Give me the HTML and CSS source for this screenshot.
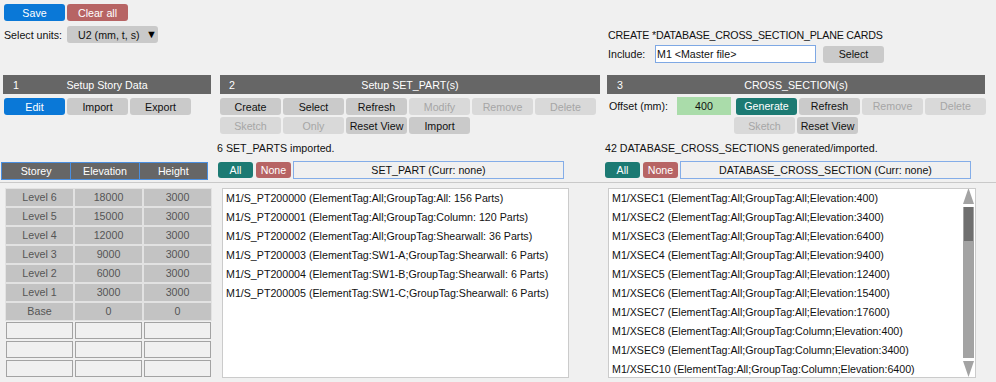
FILE: index.html
```html
<!DOCTYPE html>
<html lang="en">
<head>
    <meta charset="UTF-8">
    <meta name="viewport" content="width=device-width, initial-scale=1.0">
    <title>Story Cross Sections</title>
    <link rel="stylesheet" href="styles.css">
</head>
<body>
    <!-- Upper part: global actions, section headers, toolbars and filters -->
    <div class="upper">
        <!-- Top row -->
        <div class="top-left">
            <div class="btn-row">
                <button class="btn blue">Save</button>
                <button class="btn red">Clear all</button>
            </div>
            <div class="units-row">
                <span class="units-label">Select units:</span>
                <div class="dropdown"><span>U2 (mm, t, s)</span><span class="caret">&#9660;</span></div>
            </div>
        </div>
        <div class="top-mid"></div>
        <div class="top-right">
            <div class="create-title">CREATE *DATABASE_CROSS_SECTION_PLANE CARDS</div>
            <div class="include-row">
                <span class="include-label">Include:</span>
                <div class="text-box">M1 &lt;Master file&gt;</div>
                <button class="btn gray">Select</button>
            </div>
        </div>

        <!-- Section headers -->
        <div class="section-head head-1"><span class="num">1</span><span class="title">Setup Story Data</span></div>
        <div class="section-head head-2"><span class="num">2</span><span class="title">Setup SET_PART(s)</span></div>
        <div class="section-head head-3"><span class="num">3</span><span class="title">CROSS_SECTION(s)</span></div>

        <!-- Toolbars -->
        <div class="ctrl-1">
            <div class="btn-row">
                <button class="btn blue">Edit</button>
                <button class="btn gray">Import</button>
                <button class="btn gray">Export</button>
            </div>
        </div>
        <div class="ctrl-2">
            <div class="btn-row">
                <button class="btn gray">Create</button>
                <button class="btn gray">Select</button>
                <button class="btn gray">Refresh</button>
                <button class="btn off">Modify</button>
                <button class="btn off">Remove</button>
                <button class="btn off">Delete</button>
            </div>
            <div class="btn-row">
                <button class="btn off">Sketch</button>
                <button class="btn off">Only</button>
                <button class="btn gray">Reset View</button>
                <button class="btn gray">Import</button>
            </div>
            <div class="status">6 SET_PARTS imported.</div>
        </div>
        <div class="ctrl-3">
            <div class="btn-row offset-row">
                <span class="offset-label">Offset (mm):</span>
                <div class="offset-input">400</div>
                <button class="btn teal">Generate</button>
                <button class="btn gray">Refresh</button>
                <button class="btn off">Remove</button>
                <button class="btn off">Delete</button>
            </div>
            <div class="btn-row indent-row">
                <button class="btn off">Sketch</button>
                <button class="btn gray">Reset View</button>
            </div>
            <div class="status">42 DATABASE_CROSS_SECTIONS generated/imported.</div>
        </div>

        <!-- Filters / table header -->
        <div class="filt-1">
            <div class="story-head">
                <div>Storey</div>
                <div>Elevation</div>
                <div>Height</div>
            </div>
        </div>
        <div class="filter-row filt-2">
            <button class="btn small teal">All</button>
            <button class="btn small red">None</button>
            <div class="filter-box set-box">SET_PART (Curr: none)</div>
        </div>
        <div class="filter-row filt-3">
            <button class="btn small teal">All</button>
            <button class="btn small red">None</button>
            <div class="filter-box xsec-box">DATABASE_CROSS_SECTION (Curr: none)</div>
        </div>
    </div>

    <div class="divider"></div>

    <!-- Lower part: story table and the two lists -->
    <div class="lower">
        <div class="story-table" id="story-table"></div>

        <div class="list set-list">
            <div class="list-items" id="set-list"></div>
        </div>

        <div class="list xsec-list">
            <div class="list-items" id="xsec-list"></div>
            <div class="scrollbar">
                <svg class="arrow" width="11" height="16" viewBox="0 0 11 16"><polygon points="5.5,0 11,16 0,16" fill="#a3a3a3"/></svg>
                <div class="track"><div class="thumb"></div></div>
                <svg class="arrow" width="11" height="16" viewBox="0 0 11 16"><polygon points="0,0 11,0 5.5,16" fill="#a3a3a3"/></svg>
            </div>
        </div>
    </div>

    <script>
        const stories = [
            ['Level 6', '18000', '3000'],
            ['Level 5', '15000', '3000'],
            ['Level 4', '12000', '3000'],
            ['Level 3', '9000', '3000'],
            ['Level 2', '6000', '3000'],
            ['Level 1', '3000', '3000'],
            ['Base', '0', '0'],
        ];

        const setParts = [
            'M1/S_PT200000 (ElementTag:All;GroupTag:All: 156 Parts)',
            'M1/S_PT200001 (ElementTag:All;GroupTag:Column: 120 Parts)',
            'M1/S_PT200002 (ElementTag:All;GroupTag:Shearwall: 36 Parts)',
            'M1/S_PT200003 (ElementTag:SW1-A;GroupTag:Shearwall: 6 Parts)',
            'M1/S_PT200004 (ElementTag:SW1-B;GroupTag:Shearwall: 6 Parts)',
            'M1/S_PT200005 (ElementTag:SW1-C;GroupTag:Shearwall: 6 Parts)',
        ];

        const xsecs = [
            ['All', 400], ['All', 3400], ['All', 6400], ['All', 9400], ['All', 12400],
            ['All', 15400], ['All', 17600], ['Column', 400], ['Column', 3400], ['Column', 6400],
        ];

        const table = document.getElementById('story-table');
        for (let i = 0; i < 10; i++) {
            const row = stories[i];
            for (let c = 0; c < 3; c++) {
                const cell = document.createElement('div');
                cell.className = row ? 'cell' : 'cell empty';
                cell.innerText = row ? row[c] : '';
                table.appendChild(cell);
            }
        }

        const setList = document.getElementById('set-list');
        setParts.forEach(text => {
            const item = document.createElement('div');
            item.className = 'item';
            item.innerText = text;
            setList.appendChild(item);
        });

        const xsecList = document.getElementById('xsec-list');
        xsecs.forEach((x, index) => {
            const item = document.createElement('div');
            item.className = 'item';
            item.innerText = `M1/XSEC${index + 1} (ElementTag:All;GroupTag:${x[0]};Elevation:${x[1]})`;
            xsecList.appendChild(item);
        });
    </script>
</body>
</html>
```

FILE: styles.css
```css
/* Base page */
body {
    margin: 0;
    width: 996px;
    height: 382px;
    overflow: hidden;
    background-color: #f0f0f0;
    font-family: "Liberation Sans", Arial, sans-serif;
    font-size: 8pt;
    color: #111;
}

/* Upper grid: top, headers, toolbars, filters */
.upper {
    display: grid;
    grid-template-columns: 216px 388px 392px;
    grid-template-rows: 75px 19px 67px 20px;
}

/* Buttons */
.btn {
    width: 61px;
    height: 17px;
    padding: 0;
    border: none;
    border-radius: 3px;
    font-family: inherit;
    font-size: 8pt;
    color: #111;
    background-color: #cacaca;
    white-space: nowrap;
}

.btn.blue { background-color: #0a78d7; color: white; }
.btn.red { background-color: #b76464; color: white; }
.btn.teal { background-color: #1c7a73; color: white; }
.btn.off { background-color: #d9d9d9; color: #a6a6a6; }

.btn.small {
    width: 35px;
    height: 16px;
}

.btn-row {
    display: flex;
    align-items: center;
    gap: 2px;
}

.btn-row + .btn-row {
    margin-top: 2px;
}

/* Top left: save / units */
.top-left {
    padding: 4px 0 0 4px;
}

.units-row {
    display: flex;
    align-items: center;
    margin-top: 5px;
}

.units-label {
    width: 63px;
}

.dropdown {
    width: 91px;
    height: 17px;
    box-sizing: border-box;
    padding: 0 1px 0 11px;
    display: flex;
    align-items: center;
    justify-content: space-between;
    background-color: #c9c9c9;
    border-radius: 3px;
}

.caret {
    font-size: 11px;
    line-height: 11px;
    color: #000;
}

/* Top right: include file */
.top-right {
    padding: 28px 0 0 4px;
}

.create-title {
    line-height: 14px;
    letter-spacing: -0.2px;
}

.include-row {
    display: flex;
    align-items: center;
    margin-top: 3px;
}

.include-label {
    width: 47px;
}

.text-box {
    width: 161px;
    height: 18px;
    box-sizing: border-box;
    padding-left: 1px;
    line-height: 16px;
    background-color: white;
    border: 1px solid #7ea8e4;
    margin-right: 7px;
}

/* Section headers */
.section-head {
    display: grid;
    grid-template-columns: 30px 1fr 30px;
    align-items: center;
    height: 19px;
    background-color: #666;
    color: white;
}

.section-head .num { padding-left: 10px; }
.section-head .title { text-align: center; }

.head-1 { margin-left: 3px; width: 208px; }
.head-2 { margin-left: 4px; width: 380px; }
.head-2 .num { padding-left: 9px; }
.head-3 { margin-left: 3px; width: 378px; }

/* Toolbars */
.ctrl-1 {
    padding: 4px 0 0 4px;
}

.ctrl-2 {
    padding: 4px 0 0 4px;
}

.ctrl-3 {
    padding: 3px 0 0 1px;
}

.status {
    margin-top: 8px;
    line-height: 13px;
}

.ctrl-2 .status {
    margin-left: -3px;
}

.offset-row {
    padding-left: 4px;
}

.offset-label {
    width: 66px;
}

.offset-input {
    width: 54px;
    height: 18px;
    line-height: 18px;
    text-align: center;
    background-color: #aadcaa;
    margin-right: 3px;
}

.indent-row {
    margin-left: 129px;
}

/* Filter rows */
.filter-row {
    display: flex;
    align-items: center;
    height: 18px;
    gap: 3px;
}

.filt-2 { padding-left: 2px; }
.filt-3 { padding-left: 1px; }

.filter-box {
    height: 18px;
    box-sizing: border-box;
    line-height: 16px;
    text-align: center;
    border: 1px solid #84ade8;
    margin-left: -1px;
}

.set-box { width: 271px; }
.xsec-box { width: 291px; }

/* Story table header */
.filt-1 {
    padding: 1px 0 0 1px;
}

.story-head {
    display: grid;
    grid-template-columns: repeat(3, 1fr);
    width: 207px;
    height: 18px;
    box-sizing: border-box;
    background-color: #666;
    border: 1px solid #4a8fe0;
    color: white;
}

.story-head div {
    line-height: 16px;
    text-align: center;
}

.story-head div + div {
    border-left: 1px solid #4a8fe0;
}

.divider {
    height: 1px;
    margin-top: 1px;
    background-color: #c9c9c9;
}

/* Lower grid */
.lower {
    display: grid;
    grid-template-columns: 216px 388px 392px;
    align-items: start;
    margin-top: 5px;
}

.story-table {
    display: grid;
    grid-template-columns: repeat(3, 67px);
    grid-auto-rows: 17px;
    gap: 2px;
    margin: 1px 0 0 6px;
}

.cell {
    line-height: 17px;
    text-align: center;
    background-color: #c3c3c3;
    color: #555;
    outline: 1px solid #e2e2e2;
}

.cell.empty {
    background-color: #f0f0f0;
    outline: none;
    box-shadow: inset 0 0 0 1px #a3a3a3;
}

.list {
    height: 190px;
    box-sizing: border-box;
    background-color: white;
    border: 1px solid #cbcbcb;
    overflow: hidden;
}

.set-list {
    width: 347px;
    margin-left: 6px;
}

.xsec-list {
    width: 368px;
    margin-left: 4px;
    display: flex;
}

.list-items {
    flex-grow: 1;
}

.item {
    padding-left: 3px;
    line-height: 19px;
    white-space: nowrap;
}

/* Scrollbar of the cross section list */
.scrollbar {
    width: 11px;
    margin: -1px 1px 0 0;
    display: flex;
    flex-direction: column;
    gap: 3px;
}

.arrow {
    display: block;
}

.track {
    flex-grow: 1;
    background-color: #a3a3a3;
    padding: 0 1px;
}

.thumb {
    height: 34px;
    background-color: #6f6f6f;
}
```
